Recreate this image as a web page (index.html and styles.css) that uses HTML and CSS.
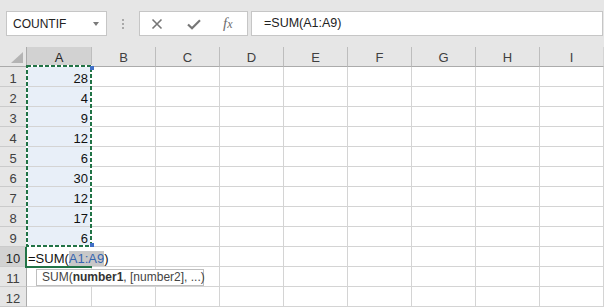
FILE: index.html
```html
<!DOCTYPE html>
<html>
<head>
<meta charset="utf-8">
<link rel="stylesheet" href="styles.css">
</head>
<body>
<div class="app">
  <div class="toolbar">
    <div class="namebox"><span class="nb-text">COUNTIF</span><span class="caret"></span></div>
    <div class="grip"><i></i><i></i><i></i></div>
    <div class="fbtns">
      <svg class="ico-x" width="12" height="12" viewBox="0 0 12 12"><path d="M1.5 1.5 L10.5 10.5 M10.5 1.5 L1.5 10.5" stroke="#767676" stroke-width="1.6" fill="none"/></svg>
      <svg class="ico-check" width="14" height="11" viewBox="0 0 14 11"><path d="M1 5.5 L5 9.2 L13 1.2" stroke="#767676" stroke-width="2.2" fill="none"/></svg>
      <span class="fx">f<span class="fx-x">x</span></span>
    </div>
    <div class="finput">=SUM(A1:A9)</div>
  </div>
  <div class="sheet">
    <div class="grid">
      <div class="corner"><svg width="12" height="11" viewBox="0 0 12 11"><path d="M12 0 L12 11 L0 11 Z" fill="#b4b4b4"/></svg></div>
      <div class="ch sel">A</div><div class="ch">B</div><div class="ch">C</div><div class="ch">D</div><div class="ch">E</div><div class="ch">F</div><div class="ch">G</div><div class="ch">H</div><div class="ch last">I</div>

      <div class="rh">1</div><div class="c rng">28</div><div class="c"></div><div class="c"></div><div class="c"></div><div class="c"></div><div class="c"></div><div class="c"></div><div class="c"></div><div class="c last"></div>
      <div class="rh">2</div><div class="c rng">4</div><div class="c"></div><div class="c"></div><div class="c"></div><div class="c"></div><div class="c"></div><div class="c"></div><div class="c"></div><div class="c last"></div>
      <div class="rh">3</div><div class="c rng">9</div><div class="c"></div><div class="c"></div><div class="c"></div><div class="c"></div><div class="c"></div><div class="c"></div><div class="c"></div><div class="c last"></div>
      <div class="rh">4</div><div class="c rng">12</div><div class="c"></div><div class="c"></div><div class="c"></div><div class="c"></div><div class="c"></div><div class="c"></div><div class="c"></div><div class="c last"></div>
      <div class="rh">5</div><div class="c rng">6</div><div class="c"></div><div class="c"></div><div class="c"></div><div class="c"></div><div class="c"></div><div class="c"></div><div class="c"></div><div class="c last"></div>
      <div class="rh">6</div><div class="c rng">30</div><div class="c"></div><div class="c"></div><div class="c"></div><div class="c"></div><div class="c"></div><div class="c"></div><div class="c"></div><div class="c last"></div>
      <div class="rh">7</div><div class="c rng">12</div><div class="c"></div><div class="c"></div><div class="c"></div><div class="c"></div><div class="c"></div><div class="c"></div><div class="c"></div><div class="c last"></div>
      <div class="rh">8</div><div class="c rng">17</div><div class="c"></div><div class="c"></div><div class="c"></div><div class="c"></div><div class="c"></div><div class="c"></div><div class="c"></div><div class="c last"></div>
      <div class="rh">9</div><div class="c rng">6</div><div class="c"></div><div class="c"></div><div class="c"></div><div class="c"></div><div class="c"></div><div class="c"></div><div class="c"></div><div class="c last"></div>
      <div class="rh sel">10</div><div class="c"></div><div class="c"></div><div class="c"></div><div class="c"></div><div class="c"></div><div class="c"></div><div class="c"></div><div class="c"></div><div class="c last"></div>
      <div class="rh">11</div><div class="c"></div><div class="c"></div><div class="c"></div><div class="c"></div><div class="c"></div><div class="c"></div><div class="c"></div><div class="c"></div><div class="c last"></div>
      <div class="rh">12</div><div class="c"></div><div class="c"></div><div class="c"></div><div class="c"></div><div class="c"></div><div class="c"></div><div class="c"></div><div class="c"></div><div class="c last"></div>
    </div>

    <div class="active-cell"></div>
    <div class="edit-text">=SUM(<span class="ref">A1:A9</span>)</div>
    <svg class="marquee" width="66" height="182" viewBox="0 0 66 182">
      <rect x="1" y="1" width="64" height="180" fill="none" stroke="#ffffff" stroke-width="2"/>
      <rect x="1" y="1" width="64" height="180" fill="none" stroke="#217346" stroke-width="2" stroke-dasharray="4 2"/>
    </svg>
    <span class="handle h-top"></span>
    <span class="handle h-bot"></span>
    <div class="tip">SUM(<b>number1</b>, [number2], ...)</div>
  </div>
</div>
</body>
</html>
```

FILE: styles.css
```css
* { box-sizing: border-box; }
html, body { margin: 0; padding: 0; }
body {
  width: 604px;
  height: 307px;
  overflow: hidden;
  font-family: "Liberation Sans", Arial, sans-serif;
  background: #ffffff;
}
.app { width: 604px; height: 307px; display: flex; flex-direction: column; }

/* ---------- toolbar ---------- */
.toolbar {
  height: 47px;
  flex: none;
  background: #e6e6e6;
  display: flex;
  align-items: flex-start;
  padding: 11px 0 0 6px;
}
.namebox {
  width: 101px;
  height: 25px;
  background: #fff;
  border: 1px solid #c6c6c6;
  display: flex;
  align-items: center;
  justify-content: space-between;
  padding: 0 7px 0 6px;
  font-size: 12px;
  color: #222;
}
.nb-text { padding-top: 1px; }
.caret {
  width: 0; height: 0;
  border-left: 3px solid transparent;
  border-right: 3px solid transparent;
  border-top: 4px solid #7a7a7a;
}
.grip {
  width: 32px;
  height: 25px;
  display: flex;
  flex-direction: column;
  align-items: center;
  justify-content: center;
  gap: 2px;
}
.grip i { display: block; width: 2px; height: 2px; background: #a9a9a9; }
.fbtns {
  width: 109px;
  height: 25px;
  background: #fff;
  border: 1px solid #c6c6c6;
  display: flex;
  align-items: center;
  padding-left: 11px;
}
.ico-x { margin-right: 24px; }
.ico-check { margin-right: 22px; margin-top: 1px; }
.fx {
  font-family: "Liberation Serif", "Times New Roman", serif;
  font-style: italic;
  font-size: 15px;
  color: #6e6e6e;
  line-height: 1;
}
.fx-x { font-size: 12px; }
.finput {
  margin-left: 3px;
  width: 352px;
  height: 25px;
  background: #fff;
  border: 1px solid #c6c6c6;
  padding: 0 0 0 12px;
  font-size: 12.5px;
  line-height: 23px;
  color: #222;
}

/* ---------- sheet ---------- */
.sheet { position: relative; flex: none; height: 260px; }
.grid {
  display: grid;
  grid-template-columns: 27px 65px repeat(8, 64px);
  grid-auto-rows: 20px;
}
.corner {
  background: #e6e6e6;
  border-right: 1px solid #ababab;
  border-bottom: 1px solid #ababab;
  display: flex;
  align-items: flex-end;
  justify-content: flex-end;
  padding: 0 3px 3px 0;
}
.ch {
  background: #e6e6e6;
  border-right: 1px solid #bdbdbd;
  border-bottom: 1px solid #ababab;
  display: flex;
  align-items: flex-end;
  justify-content: center;
  font-size: 13px;
  line-height: 15px;
  padding-bottom: 1px;
  color: #404040;
}
.ch.sel { background: #d2d2d2; color: #262626; }
.ch.last { border-right-color: #d4d4d4; }
.rh {
  background: #e6e6e6;
  border-right: 1px solid #ababab;
  border-bottom: 1px solid #cbcbcb;
  display: flex;
  align-items: flex-end;
  justify-content: center;
  font-size: 13px;
  line-height: 15px;
  color: #404040;
}
.rh.sel { background: #d2d2d2; color: #262626; }
.c {
  background: #fff;
  border-right: 1px solid #d4d4d4;
  border-bottom: 1px solid #d4d4d4;
  display: flex;
  align-items: flex-end;
  justify-content: flex-end;
  font-size: 13px;
  line-height: 15px;
  padding-right: 3px;
  color: #111;
}
.c.rng { background: #e8eff8; border-right-color: #e8eff8; }

/* ---------- overlays ---------- */
.active-cell {
  position: absolute;
  left: 25px;
  top: 200px;
  width: 67px;
  height: 21px;
  border: 2px solid #217346;
  border-top: none;
}
.edit-text {
  position: absolute;
  left: 27px;
  top: 200px;
  width: 85px;
  height: 19px;
  background: #fff;
  padding-left: 1px;
  font-size: 13px;
  line-height: 15px;
  padding-top: 4px;
  color: #111;
  white-space: nowrap;
}
.ref { background: #c8c8c8; color: #3565b0; }
.marquee { position: absolute; left: 26px; top: 18px; }
.handle {
  position: absolute;
  width: 4px;
  height: 4px;
  background: #3f6fc6;
}
.h-top { left: 90px; top: 19px; }
.h-bot { left: 90px; top: 196px; }
.tip {
  position: absolute;
  left: 36px;
  top: 222px;
  width: 168px;
  height: 17px;
  background: #fff;
  border: 1px solid #bfbfbf;
  padding-left: 5px;
  font-size: 12px;
  line-height: 15px;
  color: #444;
  white-space: nowrap;
}
.tip b { color: #333; }
```
